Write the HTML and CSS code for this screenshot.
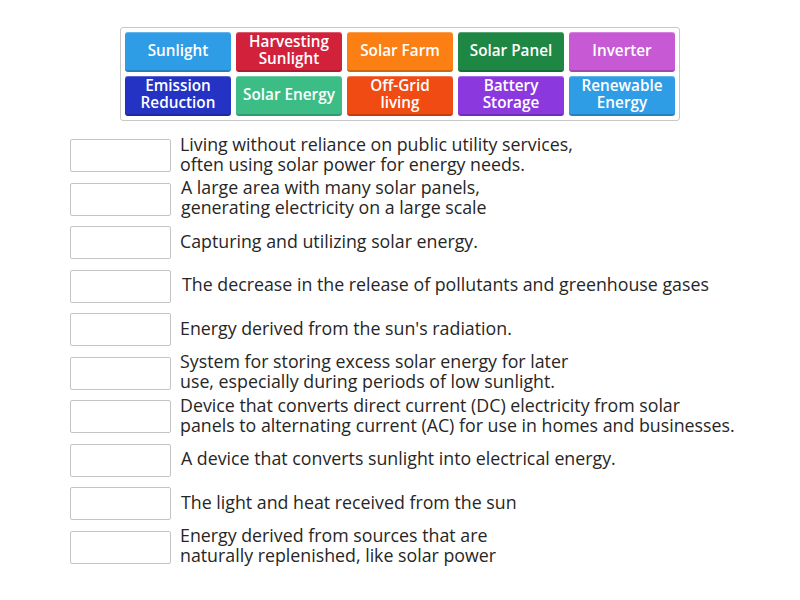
FILE: index.html
```html
<!DOCTYPE html>
<html lang="en">
<head>
    <meta charset="UTF-8">
    <meta name="viewport" content="width=device-width, initial-scale=1.0">
    <title>Match up</title>
    <link rel="stylesheet" href="styles.css">
</head>
<body>
    <div class="bank">
        <div class="tile blue">Sunlight</div>
        <div class="tile red">Harvesting<br>Sunlight</div>
        <div class="tile orange">Solar Farm</div>
        <div class="tile green">Solar Panel</div>
        <div class="tile pink">Inverter</div>
        <div class="tile navy">Emission<br>Reduction</div>
        <div class="tile teal">Solar Energy</div>
        <div class="tile vermilion">Off-Grid<br>living</div>
        <div class="tile purple">Battery<br>Storage</div>
        <div class="tile blue">Renewable<br>Energy</div>
    </div>
    <!-- definitions -->
    <div class="list">
        <div class="row"><div class="slot"></div><p>Living without reliance on public utility services,<br>often using solar power for energy needs.</p></div>
        <div class="row"><div class="slot"></div><p class="nudge">A large area with many solar panels,<br>generating electricity on a large scale</p></div>
        <div class="row"><div class="slot"></div><p>Capturing and utilizing solar energy.</p></div>
        <div class="row"><div class="slot"></div><p class="nudge2">The decrease in the release of pollutants and greenhouse gases</p></div>
        <div class="row"><div class="slot"></div><p>Energy derived from the sun's radiation.</p></div>
        <div class="row"><div class="slot"></div><p>System for storing excess solar energy for later<br>use, especially during periods of low sunlight.</p></div>
        <div class="row"><div class="slot"></div><p>Device that converts direct current (DC) electricity from solar<br>panels to alternating current (AC) for use in homes and businesses.</p></div>
        <div class="row"><div class="slot"></div><p class="nudge">A device that converts sunlight into electrical energy.</p></div>
        <div class="row"><div class="slot"></div><p class="nudge">The light and heat received from the sun</p></div>
        <div class="row"><div class="slot"></div><p>Energy derived from sources that are<br>naturally replenished, like solar power</p></div>
    </div>
</body>
</html>
```

FILE: styles.css
```css
body{margin: 0;padding-bottom: 30px;font-family: "Open Sans", "Liberation Sans", sans-serif;color: #262626;background: #fff;}
.bank{width: 550px;margin: 27px auto 0;border: 1px solid #c8c8c8;border-radius: 3px;padding: 4px;display: grid;grid-template-columns: repeat(5, 106px);grid-auto-rows: 40px;column-gap: 5px;row-gap: 4px;}
.tile{display: flex;align-items: center;justify-content: center;text-align: center;color: #fff;font-weight: 600;font-size: 15.3px;line-height: 17px;padding-bottom: 2px;border-radius: 3px;border-bottom: 2px solid rgba(0,0,0,0.18);box-shadow: inset 0 1px 0 rgba(255,255,255,0.25);}
.blue{background: #2f9de6;}
.red{background: #d2223b;}
.orange{background: #fb7f12;}
.green{background: #1f8744;}
.pink{background: #c75ad4;}
.navy{background: #2433c4;}
.teal{background: #3dbd86;}
.vermilion{background: #f04b12;}
.purple{background: #8c38df;}
.list{margin: 18px 0 0 70px;display: flex;flex-direction: column;gap: 10.56px;}
.row{height: 33px;display: flex;align-items: center;gap: 9px;}
.slot{width: 99px;height: 31px;border: 1px solid #c4c4c4;border-radius: 2px;background: #fff;flex: none;}
.row p{margin: 0 0 4px;font-size: 17.8px;line-height: 20px;white-space: nowrap;}
.nudge{padding-left: 1px;}
.nudge2{padding-left: 2px;}
```
